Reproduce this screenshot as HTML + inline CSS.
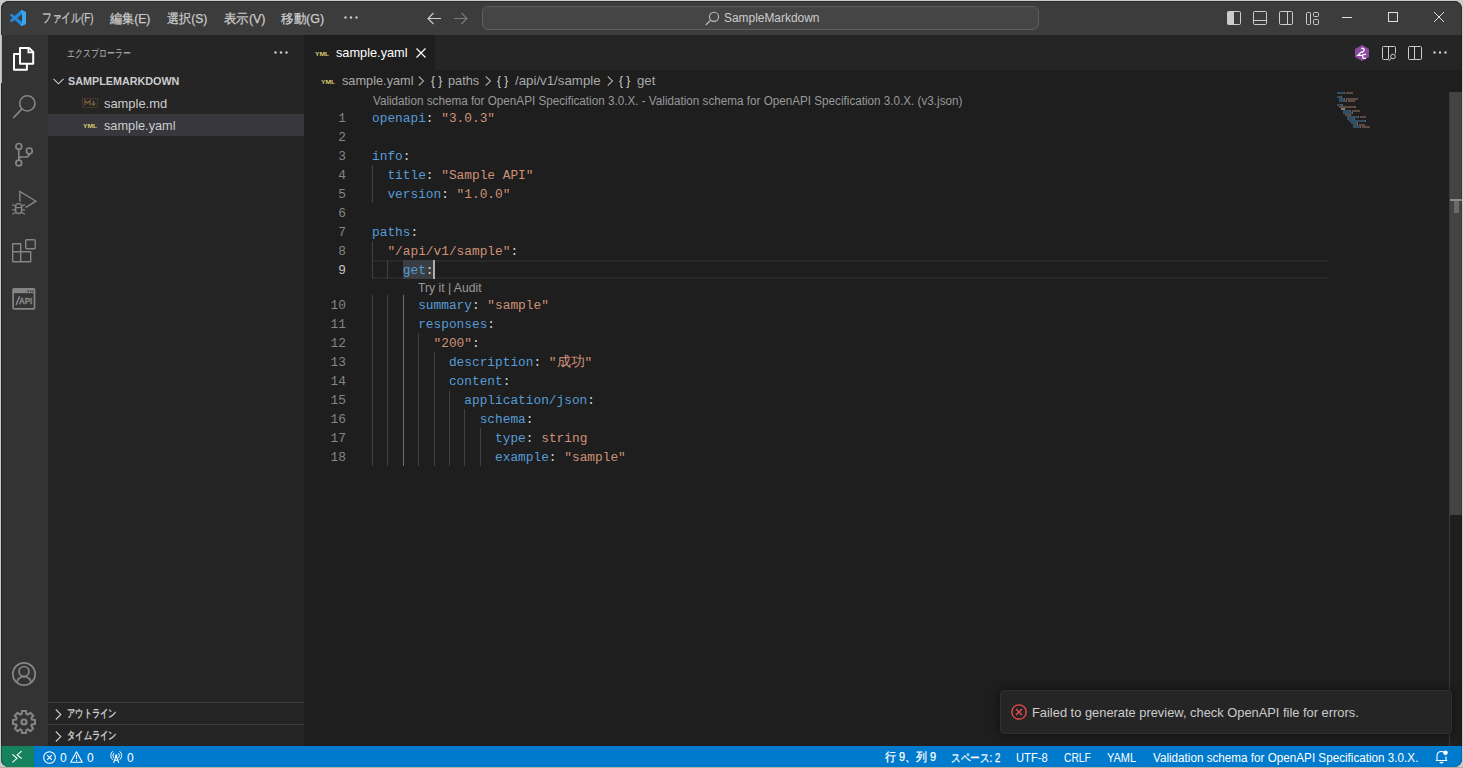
<!DOCTYPE html>
<html><head><meta charset="utf-8">
<style>
*{margin:0;padding:0;box-sizing:border-box}
html,body{width:1463px;height:768px;overflow:hidden;background:#cacaca}
body{font-family:"Liberation Sans",sans-serif;position:relative}
.a{position:absolute}
#win{position:absolute;left:0;top:0;width:1463px;height:768px;clip-path:inset(1px 1px 1px 1px round 8px);background:#1e1e1e}
#frame{position:absolute;left:1px;top:1px;width:1461px;height:766px;border-radius:8px;border:1px solid rgba(0,0,0,0.28);border-bottom-color:transparent;border-right-color:rgba(0,0,0,0.15);pointer-events:none}
.t{white-space:pre;line-height:1}
#title{left:0;top:0;width:1463px;height:35px;background:#3c3c3c}
#act{left:0;top:35px;width:48px;height:711px;background:#333333}
#side{left:48px;top:35px;width:256px;height:711px;background:#252526}
#tabs{left:304px;top:35px;width:1159px;height:35px;background:#252526}
#status{left:0;top:746px;width:1463px;height:22px;background:#007acc}
.menu{color:#cccccc;font-size:13px;top:12px}
.code{font-family:"Liberation Mono",monospace;font-size:12.82px;line-height:19px;height:19px;white-space:pre;color:#d4d4d4}
.k{color:#569cd6}.s{color:#ce9178}.p{color:#d4d4d4}
.ln{color:#858585;text-align:right;width:60px;left:286px;font-family:"Liberation Mono",monospace;font-size:12.82px;line-height:19px;height:19px}
.ln.cur{color:#c6c6c6}
.ig{position:absolute;width:1px}
.st{color:#ffffff;font-size:12px;top:752px}
svg{position:absolute;overflow:visible}
</style></head><body>
<div class="a" style="left:0;top:767px;width:1463px;height:1px;background:#b9ada2"></div>
<div id="win">
<div class="a" id="title"></div>
<div class="a" id="act"></div>
<div class="a" id="side"></div>
<div class="a" id="tabs"></div>
<div class="a" style="left:304px;top:35px;width:131px;height:35px;background:#1e1e1e"></div>
<div class="a" id="status"></div>
<div class="a" style="left:0;top:746px;width:34px;height:22px;background:#16825d"></div>

<!-- TITLE BAR -->
<svg style="left:10px;top:10px" width="16" height="16" viewBox="0 0 100 100">
 <path d="M96.46 10.8 L75.86 0.87 C73.47 -0.28 70.62 0.2 68.75 2.08 L29.3 38.06 L12.12 25.02 C10.52 23.8 8.28 23.9 6.79 25.26 L1.28 30.27 C-0.53 31.92 -0.53 34.77 1.28 36.42 L16.18 50 L1.28 63.58 C-0.53 65.23 -0.53 68.08 1.28 69.73 L6.79 74.74 C8.28 76.1 10.52 76.2 12.12 74.98 L29.3 61.94 L68.75 97.92 C70.62 99.8 73.47 100.28 75.86 99.13 L96.46 89.2 C98.62 88.16 100 85.97 100 83.57 V16.43 C100 14.03 98.62 11.84 96.46 10.8 Z M75.02 72.7 L45.08 50 L75.02 27.3 Z" fill="#2489db" fill-rule="evenodd"/>
 <path d="M75.86 0.87 L96.46 10.8 C98.62 11.84 100 14.03 100 16.43 V83.57 C100 85.97 98.62 88.16 96.46 89.2 L75.86 99.13 C73.9 100 72 100 70.5 99 L75.02 72.7 V27.3 L70.5 1 C72 0 73.9 0 75.86 0.87Z" fill="#3aa6ef"/>
</svg>
<svg style="left:344px;top:16px" width="14" height="4"><circle cx="1.5" cy="1.5" r="1.2" fill="#cccccc"/><circle cx="7" cy="1.5" r="1.2" fill="#cccccc"/><circle cx="12.5" cy="1.5" r="1.2" fill="#cccccc"/></svg>
<svg style="left:427px;top:12px" width="15" height="13" viewBox="0 0 15 13"><path d="M14 6.5 H1.5 M6.5 1 L1 6.5 L6.5 12" stroke="#cccccc" stroke-width="1.1" fill="none"/></svg>
<svg style="left:453px;top:12px" width="15" height="13" viewBox="0 0 15 13"><path d="M1 6.5 H13.5 M8.5 1 L14 6.5 L8.5 12" stroke="#7a7a7a" stroke-width="1.1" fill="none"/></svg>
<div class="a" style="left:482px;top:6px;width:557px;height:24px;border-radius:6px;background:#454545;border:1px solid #5e5e5e"></div>
<svg style="left:705px;top:11px" width="15" height="15" viewBox="0 0 15 15"><circle cx="9" cy="5.8" r="4.6" stroke="#bdbdbd" stroke-width="1.1" fill="none"/><path d="M5.7 9.1 L0.8 14" stroke="#bdbdbd" stroke-width="1.2"/></svg>
<!-- layout icons -->
<svg style="left:1227px;top:11px" width="14" height="14" viewBox="0 0 14 14"><rect x="0.5" y="0.5" width="13" height="13" rx="1.2" fill="none" stroke="#cccccc"/><rect x="0.5" y="0.5" width="6" height="13" fill="#cccccc"/><path d="M6.5 0.5V13.5" stroke="#cccccc"/></svg>
<svg style="left:1253px;top:11px" width="14" height="14" viewBox="0 0 14 14"><rect x="0.5" y="0.5" width="13" height="13" rx="1.2" fill="none" stroke="#cccccc"/><path d="M0.5 9.5H13.5" stroke="#cccccc"/></svg>
<svg style="left:1279px;top:11px" width="14" height="14" viewBox="0 0 14 14"><rect x="0.5" y="0.5" width="13" height="13" rx="1.2" fill="none" stroke="#cccccc"/><path d="M8.5 0.5V13.5" stroke="#cccccc"/></svg>
<svg style="left:1306px;top:12px" width="14" height="13" viewBox="0 0 14 13"><rect x="0.5" y="0.5" width="4" height="12" rx="1" fill="none" stroke="#cccccc"/><rect x="7.5" y="0.5" width="5" height="4" rx="1" fill="none" stroke="#cccccc"/><rect x="7.5" y="7.5" width="5" height="5" rx="1" fill="none" stroke="#cccccc"/></svg>
<!-- window controls -->
<div class="a" style="left:1342px;top:17px;width:10px;height:1px;background:#e0e0e0"></div>
<div class="a" style="left:1388px;top:12px;width:10px;height:10px;border:1px solid #e0e0e0"></div>
<svg style="left:1434px;top:12px" width="10" height="10" viewBox="0 0 10 10"><path d="M0 0L10 10M10 0L0 10" stroke="#e0e0e0" stroke-width="1"/></svg>

<!-- ACTIVITY BAR -->
<div class="a" style="left:0;top:35px;width:2px;height:48px;background:#ffffff"></div>
<svg style="left:12px;top:47px" width="24" height="24" viewBox="0 0 24 24">
 <path d="M8 1.1 H17.3 L21.2 5 V16.8 H8 Z" fill="none" stroke="#ffffff" stroke-width="2" stroke-linejoin="round"/>
 <path d="M16.4 1.1 V5.4 H21.2" fill="none" stroke="#ffffff" stroke-width="1.8"/>
 <path d="M8 7 H2 V22.8 H14.9 V16.8" fill="none" stroke="#ffffff" stroke-width="2" stroke-linejoin="round"/>
</svg>
<svg style="left:12px;top:95px" width="24" height="24" viewBox="0 0 24 24">
 <circle cx="15.3" cy="8.4" r="7.6" fill="none" stroke="#858585" stroke-width="1.6"/><path d="M9.9 13.8 L1.3 23" stroke="#858585" stroke-width="1.8"/>
</svg>
<svg style="left:12px;top:143px" width="24" height="24" viewBox="0 0 24 24">
 <circle cx="6.8" cy="3.4" r="2.9" fill="none" stroke="#858585" stroke-width="1.7"/>
 <circle cx="17.3" cy="7.9" r="2.9" fill="none" stroke="#858585" stroke-width="1.7"/>
 <circle cx="6.8" cy="20" r="2.9" fill="none" stroke="#858585" stroke-width="1.7"/>
 <path d="M6.8 6.3 V17.1 M17.3 10.8 Q17.3 14 14 14 H9.5 Q6.8 14 6.8 16.5" fill="none" stroke="#858585" stroke-width="1.6"/>
</svg>
<svg style="left:12px;top:191px" width="24" height="24" viewBox="0 0 24 24">
 <path d="M7.9 10.6 V0.4 L23.9 10.2 L13.5 16.6" fill="none" stroke="#858585" stroke-width="1.4" stroke-linejoin="miter"/>
 <rect x="3.6" y="12.6" width="6.1" height="10" rx="3" fill="none" stroke="#858585" stroke-width="1.4"/>
 <path d="M3.6 16.6 H9.7 M0.4 13.6 L3.2 15 M0.3 18.8 H3.4 M0.4 23.2 L3.3 21.6 M12.9 13.6 L10.1 15 M13 18.8 H9.9 M12.9 23.2 L10 21.6" stroke="#858585" stroke-width="1.3" fill="none"/>
</svg>
<svg style="left:12px;top:239px" width="24" height="24" viewBox="0 0 24 24">
 <path d="M0.7 4.7 H8.7 V12.7 H18.7 V22.7 H0.7 Z M0.7 12.7 H8.7 V22.7" fill="none" stroke="#858585" stroke-width="1.4" stroke-linejoin="round"/>
 <rect x="13.7" y="0.7" width="9.5" height="9" rx="1" fill="none" stroke="#858585" stroke-width="1.4"/>
</svg>
<svg style="left:12px;top:287px" width="24" height="24" viewBox="0 0 24 24">
 <rect x="1.1" y="1.8" width="21.4" height="20" rx="1" fill="none" stroke="#858585" stroke-width="1.7"/>
 <rect x="1.1" y="1.8" width="21.4" height="4.4" fill="#858585"/>
 <rect x="15.6" y="3.3" width="1.2" height="1.8" fill="#333333"/><rect x="18.1" y="3.3" width="1.2" height="1.8" fill="#333333"/><rect x="20.4" y="3.3" width="1.2" height="1.8" fill="#333333"/>
 <path d="M7.6 9.2 L4.1 17.9" stroke="#858585" stroke-width="1.5"/>
 <text x="7" y="17.3" font-family="Liberation Sans" font-weight="bold" font-size="9.8" fill="#858585" stroke="#858585" stroke-width="0.35" textLength="13.2" lengthAdjust="spacingAndGlyphs">API</text>
</svg>
<svg style="left:12px;top:662px" width="24" height="24" viewBox="0 0 24 24">
 <circle cx="12" cy="12" r="11.2" fill="none" stroke="#858585" stroke-width="1.7"/>
 <circle cx="12" cy="9.4" r="4.9" fill="none" stroke="#858585" stroke-width="1.7"/>
 <path d="M4.6 20.5 C5.8 16.8 8.5 14.7 12 14.7 C15.5 14.7 18.2 16.8 19.4 20.5" fill="none" stroke="#858585" stroke-width="1.7"/>
</svg>
<svg style="left:11px;top:709px" width="26" height="26" viewBox="0 0 26 26">
 <path d="M10.50 5.10 L11.10 2.00 L14.90 2.00 L15.50 5.10 L16.82 5.65 L19.43 3.88 L22.12 6.57 L20.35 9.18 L20.90 10.50 L24.00 11.10 L24.00 14.90 L20.90 15.50 L20.35 16.82 L22.12 19.43 L19.43 22.12 L16.82 20.35 L15.50 20.90 L14.90 24.00 L11.10 24.00 L10.50 20.90 L9.18 20.35 L6.57 22.12 L3.88 19.43 L5.65 16.82 L5.10 15.50 L2.00 14.90 L2.00 11.10 L5.10 10.50 L5.65 9.18 L3.88 6.57 L6.57 3.88 L9.18 5.65 Z" fill="none" stroke="#858585" stroke-width="2" stroke-linejoin="miter"/>
 <circle cx="13" cy="13" r="2.5" fill="none" stroke="#858585" stroke-width="2.2"/>
</svg>

<!-- SIDEBAR -->
<svg style="left:274px;top:51px" width="14" height="4"><circle cx="1.5" cy="1.5" r="1.2" fill="#cccccc"/><circle cx="7" cy="1.5" r="1.2" fill="#cccccc"/><circle cx="12.5" cy="1.5" r="1.2" fill="#cccccc"/></svg>
<svg style="left:53px;top:78px" width="11" height="7" viewBox="0 0 11 7"><path d="M0.5 0.8 L5.5 5.8 L10.5 0.8" fill="none" stroke="#cccccc" stroke-width="1.1"/></svg>
<div class="a" style="left:48px;top:114px;width:256px;height:22px;background:#37373d"></div>
<svg style="left:82px;top:98px" width="16" height="10" viewBox="0 0 16 10"><rect x="0.5" y="0.5" width="15" height="9" fill="none" stroke="#45372a" stroke-width="1"/><path d="M3 7.5 V2.5 L5.5 5.2 L8 2.5 V7.5 M11.5 2.5 V7.3 M9.6 5.4 L11.5 7.4 L13.4 5.4" fill="none" stroke="#7a5f3c" stroke-width="1.2"/></svg>
<svg style="left:82.8px;top:122.8px" width="15" height="5" viewBox="0 0 15 5"><text x="0" y="4.6" font-family="Liberation Sans" font-weight="bold" font-size="6.2" fill="#dccb6e" textLength="14.2" lengthAdjust="spacingAndGlyphs">YML</text></svg>
<div class="a" style="left:48px;top:702px;width:256px;height:1px;background:#3c3c3c"></div>
<div class="a" style="left:48px;top:724px;width:256px;height:1px;background:#3c3c3c"></div>
<svg style="left:55px;top:709px" width="7" height="11" viewBox="0 0 7 11"><path d="M0.8 0.5 L5.8 5.5 L0.8 10.5" fill="none" stroke="#cccccc" stroke-width="1.1"/></svg>
<svg style="left:55px;top:731px" width="7" height="11" viewBox="0 0 7 11"><path d="M0.8 0.5 L5.8 5.5 L0.8 10.5" fill="none" stroke="#cccccc" stroke-width="1.1"/></svg>

<!-- TABS -->
<svg style="left:314.7px;top:50.6px" width="15" height="5" viewBox="0 0 15 5"><text x="0" y="4.6" font-family="Liberation Sans" font-weight="bold" font-size="6.2" fill="#dccb6e" textLength="14.2" lengthAdjust="spacingAndGlyphs">YML</text></svg>
<svg style="left:416px;top:48px" width="10" height="10" viewBox="0 0 10 10"><path d="M0.5 0.5L9.5 9.5M9.5 0.5L0.5 9.5" stroke="#ffffff" stroke-width="1.2"/></svg>
<!-- editor actions -->
<svg style="left:1355px;top:45px" width="14" height="16" viewBox="0 0 14 16"><path d="M7 0 L14 4 V12 L7 16 L0 12 V4 Z" fill="#8a4a9e"/><path d="M6.3 3.6 Q8.6 2.6 9.2 4.3 Q9.4 5.8 6.8 7.6 M6.6 6.6 L2.9 10.4 H7.4 M11 9.4 H8.9 Q7.7 9.4 7.7 10.8 V12 Q7.7 13.3 9 13.3 H11" fill="none" stroke="#ffffff" stroke-width="1.3"/></svg>
<svg style="left:1382px;top:46px" width="15" height="15" viewBox="0 0 15 15"><path d="M6 13.5 H1.5 Q0.5 13.5 0.5 12.5 V1.5 Q0.5 0.5 1.5 0.5 H12.5 Q13.5 0.5 13.5 1.5 V7.5 M6.5 0.5 V13.5" fill="none" stroke="#cccccc"/><circle cx="11" cy="10.5" r="2.3" fill="none" stroke="#cccccc"/><path d="M9.3 12.2 L7 14.8" stroke="#cccccc"/></svg>
<svg style="left:1408px;top:46px" width="14" height="14" viewBox="0 0 14 14"><rect x="0.5" y="0.5" width="13" height="13" rx="1" fill="none" stroke="#cccccc"/><path d="M6.5 0.5 V13.5" stroke="#cccccc"/></svg>
<svg style="left:1433px;top:51px" width="14" height="4"><circle cx="1.5" cy="1.5" r="1.2" fill="#cccccc"/><circle cx="7" cy="1.5" r="1.2" fill="#cccccc"/><circle cx="12.5" cy="1.5" r="1.2" fill="#cccccc"/></svg>

<!-- BREADCRUMBS -->
<svg style="left:320.8px;top:78.6px" width="15" height="5" viewBox="0 0 15 5"><text x="0" y="4.6" font-family="Liberation Sans" font-weight="bold" font-size="6.2" fill="#dccb6e" textLength="14.2" lengthAdjust="spacingAndGlyphs">YML</text></svg>
<svg style="left:418px;top:76px" width="7" height="10" viewBox="0 0 7 10"><path d="M0.8 0.5 L5.5 5 L0.8 9.5" fill="none" stroke="#a9a9a9" stroke-width="1.1"/></svg>
<svg style="left:485px;top:76px" width="7" height="10" viewBox="0 0 7 10"><path d="M0.8 0.5 L5.5 5 L0.8 9.5" fill="none" stroke="#a9a9a9" stroke-width="1.1"/></svg>
<svg style="left:607px;top:76px" width="7" height="10" viewBox="0 0 7 10"><path d="M0.8 0.5 L5.5 5 L0.8 9.5" fill="none" stroke="#a9a9a9" stroke-width="1.1"/></svg>
<div class="a t" style="left:42.05px;top:11px;font-size:13px;color:#cccccc;-webkit-text-stroke:0.25px currentColor;transform:scaleX(0.7493);transform-origin:0 0">ファイル(F)</div>
<div class="a t" style="left:109.80px;top:12px;font-size:13px;color:#cccccc;-webkit-text-stroke:0.25px currentColor;transform:scaleX(0.9302);transform-origin:0 0">編集(E)</div>
<div class="a t" style="left:166.70px;top:12px;font-size:13px;color:#cccccc;-webkit-text-stroke:0.25px currentColor;transform:scaleX(0.9302);transform-origin:0 0">選択(S)</div>
<div class="a t" style="left:223.70px;top:12px;font-size:13px;color:#cccccc;-webkit-text-stroke:0.25px currentColor;transform:scaleX(0.9581);transform-origin:0 0">表示(V)</div>
<div class="a t" style="left:281.00px;top:12px;font-size:13px;color:#cccccc;-webkit-text-stroke:0.25px currentColor;transform:scaleX(0.9659);transform-origin:0 0">移動(G)</div>
<div class="a t" style="left:723.80px;top:12px;font-size:12px;color:#cccccc;transform:scaleX(0.9938);transform-origin:0 0">SampleMarkdown</div>
<div class="a t" style="left:67.48px;top:48px;font-size:11px;color:#bbbbbb;transform:scaleX(0.7221);transform-origin:0 0">エクスプローラー</div>
<div class="a t" style="left:68.20px;top:76px;font-size:11px;font-weight:bold;color:#cccccc;transform:scaleX(0.9796);transform-origin:0 0">SAMPLEMARKDOWN</div>
<div class="a t" style="left:104.00px;top:97px;font-size:13px;color:#cccccc;transform:scaleX(0.9921);transform-origin:0 0">sample.md</div>
<div class="a t" style="left:104.00px;top:119px;font-size:13px;color:#cccccc;transform:scaleX(0.9806);transform-origin:0 0">sample.yaml</div>
<div class="a t" style="left:67.35px;top:708px;font-size:11px;font-weight:bold;color:#cccccc;transform:scaleX(0.7523);transform-origin:0 0">アウトライン</div>
<div class="a t" style="left:67.35px;top:730px;font-size:11px;font-weight:bold;color:#cccccc;transform:scaleX(0.7523);transform-origin:0 0">タイムライン</div>
<div class="a t" style="left:336.00px;top:46px;font-size:13px;color:#ffffff;transform:scaleX(0.9806);transform-origin:0 0">sample.yaml</div>
<div class="a t" style="left:342.00px;top:74px;font-size:13px;color:#a9a9a9;transform:scaleX(0.9806);transform-origin:0 0">sample.yaml</div>
<div class="a t" style="left:431.00px;top:74px;font-size:13px;color:#cccccc;transform:scaleX(0.9154);transform-origin:0 0">{ }</div>
<div class="a t" style="left:447.72px;top:74px;font-size:13px;color:#a9a9a9;transform:scaleX(0.9774);transform-origin:0 0">paths</div>
<div class="a t" style="left:497.00px;top:74px;font-size:13px;color:#cccccc;transform:scaleX(0.9154);transform-origin:0 0">{ }</div>
<div class="a t" style="left:515.20px;top:74px;font-size:13px;color:#a9a9a9;transform:scaleX(1.0214);transform-origin:0 0">/api/v1/sample</div>
<div class="a t" style="left:618.80px;top:74px;font-size:13px;color:#cccccc;transform:scaleX(0.9154);transform-origin:0 0">{ }</div>
<div class="a t" style="left:636.60px;top:74px;font-size:13px;color:#a9a9a9;transform:scaleX(1.0167);transform-origin:0 0">get</div>
<div class="a t" style="left:372.60px;top:95px;font-size:12px;color:#999999;transform:scaleX(0.9739);transform-origin:0 0">Validation schema for OpenAPI Specification 3.0.X. - Validation schema for OpenAPI Specification 3.0.X. (v3.json)</div>
<div class="a t" style="left:418.10px;top:282px;font-size:12px;color:#999999;transform:scaleX(1.0143);transform-origin:0 0">Try it | Audit</div>
<div class="a t" style="left:885.40px;top:751px;font-size:12px;color:#ffffff;-webkit-text-stroke:0.25px currentColor;transform:scaleX(0.9143);transform-origin:0 0">行 9、列 9</div>
<div class="a t" style="left:951.20px;top:752px;font-size:12px;color:#ffffff;-webkit-text-stroke:0.25px currentColor;transform:scaleX(0.8033);transform-origin:0 0">スペース: 2</div>
<div class="a t" style="left:1016.27px;top:752px;font-size:12px;color:#ffffff;transform:scaleX(0.9333);transform-origin:0 0">UTF-8</div>
<div class="a t" style="left:1063.80px;top:752px;font-size:12px;color:#ffffff;transform:scaleX(0.8581);transform-origin:0 0">CRLF</div>
<div class="a t" style="left:1106.80px;top:752px;font-size:12px;color:#ffffff;transform:scaleX(0.9156);transform-origin:0 0">YAML</div>
<div class="a t" style="left:1152.60px;top:752px;font-size:12px;color:#ffffff;transform:scaleX(0.9735);transform-origin:0 0">Validation schema for OpenAPI Specification 3.0.X.</div>

<!-- EDITOR -->
<div class="a" style="left:372px;top:260px;width:957px;height:19px;border-top:2px solid #282828;border-bottom:2px solid #282828"></div>
<div class="a" style="left:403px;top:260px;width:31px;height:19px;background:#3a3d41"></div>
<div class="ig" style="left:372px;top:165px;height:19px;background:#404040"></div>
<div class="ig" style="left:372px;top:184px;height:19px;background:#404040"></div>
<div class="ig" style="left:372px;top:241px;height:19px;background:#404040"></div>
<div class="ig" style="left:372px;top:260px;height:19px;background:#404040"></div>
<div class="ig" style="left:387px;top:260px;height:19px;background:#404040"></div>
<div class="ig" style="left:372px;top:295px;height:19px;background:#404040"></div>
<div class="ig" style="left:387px;top:295px;height:19px;background:#404040"></div>
<div class="ig" style="left:403px;top:295px;height:19px;background:#707070"></div>
<div class="ig" style="left:372px;top:314px;height:19px;background:#404040"></div>
<div class="ig" style="left:387px;top:314px;height:19px;background:#404040"></div>
<div class="ig" style="left:403px;top:314px;height:19px;background:#707070"></div>
<div class="ig" style="left:372px;top:333px;height:19px;background:#404040"></div>
<div class="ig" style="left:387px;top:333px;height:19px;background:#404040"></div>
<div class="ig" style="left:403px;top:333px;height:19px;background:#707070"></div>
<div class="ig" style="left:418px;top:333px;height:19px;background:#404040"></div>
<div class="ig" style="left:372px;top:352px;height:19px;background:#404040"></div>
<div class="ig" style="left:387px;top:352px;height:19px;background:#404040"></div>
<div class="ig" style="left:403px;top:352px;height:19px;background:#707070"></div>
<div class="ig" style="left:418px;top:352px;height:19px;background:#404040"></div>
<div class="ig" style="left:434px;top:352px;height:19px;background:#404040"></div>
<div class="ig" style="left:372px;top:371px;height:19px;background:#404040"></div>
<div class="ig" style="left:387px;top:371px;height:19px;background:#404040"></div>
<div class="ig" style="left:403px;top:371px;height:19px;background:#707070"></div>
<div class="ig" style="left:418px;top:371px;height:19px;background:#404040"></div>
<div class="ig" style="left:434px;top:371px;height:19px;background:#404040"></div>
<div class="ig" style="left:372px;top:390px;height:19px;background:#404040"></div>
<div class="ig" style="left:387px;top:390px;height:19px;background:#404040"></div>
<div class="ig" style="left:403px;top:390px;height:19px;background:#707070"></div>
<div class="ig" style="left:418px;top:390px;height:19px;background:#404040"></div>
<div class="ig" style="left:434px;top:390px;height:19px;background:#404040"></div>
<div class="ig" style="left:449px;top:390px;height:19px;background:#404040"></div>
<div class="ig" style="left:372px;top:409px;height:19px;background:#404040"></div>
<div class="ig" style="left:387px;top:409px;height:19px;background:#404040"></div>
<div class="ig" style="left:403px;top:409px;height:19px;background:#707070"></div>
<div class="ig" style="left:418px;top:409px;height:19px;background:#404040"></div>
<div class="ig" style="left:434px;top:409px;height:19px;background:#404040"></div>
<div class="ig" style="left:449px;top:409px;height:19px;background:#404040"></div>
<div class="ig" style="left:464px;top:409px;height:19px;background:#404040"></div>
<div class="ig" style="left:372px;top:428px;height:19px;background:#404040"></div>
<div class="ig" style="left:387px;top:428px;height:19px;background:#404040"></div>
<div class="ig" style="left:403px;top:428px;height:19px;background:#707070"></div>
<div class="ig" style="left:418px;top:428px;height:19px;background:#404040"></div>
<div class="ig" style="left:434px;top:428px;height:19px;background:#404040"></div>
<div class="ig" style="left:449px;top:428px;height:19px;background:#404040"></div>
<div class="ig" style="left:464px;top:428px;height:19px;background:#404040"></div>
<div class="ig" style="left:480px;top:428px;height:19px;background:#404040"></div>
<div class="ig" style="left:372px;top:447px;height:19px;background:#404040"></div>
<div class="ig" style="left:387px;top:447px;height:19px;background:#404040"></div>
<div class="ig" style="left:403px;top:447px;height:19px;background:#707070"></div>
<div class="ig" style="left:418px;top:447px;height:19px;background:#404040"></div>
<div class="ig" style="left:434px;top:447px;height:19px;background:#404040"></div>
<div class="ig" style="left:449px;top:447px;height:19px;background:#404040"></div>
<div class="ig" style="left:464px;top:447px;height:19px;background:#404040"></div>
<div class="ig" style="left:480px;top:447px;height:19px;background:#404040"></div>
<div class="a ln" style="top:109px">1</div>
<div class="a code" style="left:372px;top:109px"><span class="k">openapi</span><span class="p">: </span><span class="s">"3.0.3"</span></div>
<div class="a ln" style="top:128px">2</div>
<div class="a code" style="left:372px;top:128px"></div>
<div class="a ln" style="top:147px">3</div>
<div class="a code" style="left:372px;top:147px"><span class="k">info</span><span class="p">:</span></div>
<div class="a ln" style="top:166px">4</div>
<div class="a code" style="left:372px;top:166px">  <span class="k">title</span><span class="p">: </span><span class="s">"Sample API"</span></div>
<div class="a ln" style="top:185px">5</div>
<div class="a code" style="left:372px;top:185px">  <span class="k">version</span><span class="p">: </span><span class="s">"1.0.0"</span></div>
<div class="a ln" style="top:204px">6</div>
<div class="a code" style="left:372px;top:204px"></div>
<div class="a ln" style="top:223px">7</div>
<div class="a code" style="left:372px;top:223px"><span class="k">paths</span><span class="p">:</span></div>
<div class="a ln" style="top:242px">8</div>
<div class="a code" style="left:372px;top:242px">  <span class="s">"/api/v1/sample"</span><span class="p">:</span></div>
<div class="a ln cur" style="top:261px">9</div>
<div class="a code" style="left:372px;top:261px">    <span class="k">get</span><span class="p">:</span></div>
<div class="a ln" style="top:296px">10</div>
<div class="a code" style="left:372px;top:296px">      <span class="k">summary</span><span class="p">: </span><span class="s">"sample"</span></div>
<div class="a ln" style="top:315px">11</div>
<div class="a code" style="left:372px;top:315px">      <span class="k">responses</span><span class="p">:</span></div>
<div class="a ln" style="top:334px">12</div>
<div class="a code" style="left:372px;top:334px">        <span class="s">"200"</span><span class="p">:</span></div>
<div class="a ln" style="top:353px">13</div>
<div class="a code" style="left:372px;top:353px">          <span class="k">description</span><span class="p">: </span><span class="s">"<span style='font-size:14px'>成功</span>"</span></div>
<div class="a ln" style="top:372px">14</div>
<div class="a code" style="left:372px;top:372px">          <span class="k">content</span><span class="p">:</span></div>
<div class="a ln" style="top:391px">15</div>
<div class="a code" style="left:372px;top:391px">            <span class="k">application/json</span><span class="p">:</span></div>
<div class="a ln" style="top:410px">16</div>
<div class="a code" style="left:372px;top:410px">              <span class="k">schema</span><span class="p">:</span></div>
<div class="a ln" style="top:429px">17</div>
<div class="a code" style="left:372px;top:429px">                <span class="k">type</span><span class="p">: </span><span class="s">string</span></div>
<div class="a ln" style="top:448px">18</div>
<div class="a code" style="left:372px;top:448px">                <span class="k">example</span><span class="p">: </span><span class="s">"sample"</span></div>
<div class="a" style="left:433px;top:260px;width:2px;height:19px;background:#aeafad"></div>

<!-- minimap -->
<div class="a" style="left:1337px;top:92px;width:7px;height:2px;background:#569cd6;opacity:0.38"></div>
<div class="a" style="left:1344px;top:92px;width:1px;height:2px;background:#d4d4d4;opacity:0.38"></div>
<div class="a" style="left:1346px;top:92px;width:7px;height:2px;background:#ce9178;opacity:0.38"></div>
<div class="a" style="left:1337px;top:96px;width:4px;height:2px;background:#569cd6;opacity:0.38"></div>
<div class="a" style="left:1341px;top:96px;width:1px;height:2px;background:#d4d4d4;opacity:0.38"></div>
<div class="a" style="left:1339px;top:98px;width:5px;height:2px;background:#569cd6;opacity:0.38"></div>
<div class="a" style="left:1344px;top:98px;width:1px;height:2px;background:#d4d4d4;opacity:0.38"></div>
<div class="a" style="left:1346px;top:98px;width:12px;height:2px;background:#ce9178;opacity:0.38"></div>
<div class="a" style="left:1339px;top:100px;width:7px;height:2px;background:#569cd6;opacity:0.38"></div>
<div class="a" style="left:1346px;top:100px;width:1px;height:2px;background:#d4d4d4;opacity:0.38"></div>
<div class="a" style="left:1348px;top:100px;width:7px;height:2px;background:#ce9178;opacity:0.38"></div>
<div class="a" style="left:1337px;top:104px;width:5px;height:2px;background:#569cd6;opacity:0.38"></div>
<div class="a" style="left:1342px;top:104px;width:1px;height:2px;background:#d4d4d4;opacity:0.38"></div>
<div class="a" style="left:1339px;top:106px;width:16px;height:2px;background:#ce9178;opacity:0.38"></div>
<div class="a" style="left:1355px;top:106px;width:1px;height:2px;background:#d4d4d4;opacity:0.38"></div>
<div class="a" style="left:1341px;top:108px;width:3px;height:2px;background:#569cd6;opacity:0.38"></div>
<div class="a" style="left:1344px;top:108px;width:1px;height:2px;background:#d4d4d4;opacity:0.38"></div>
<div class="a" style="left:1343px;top:110px;width:7px;height:2px;background:#569cd6;opacity:0.38"></div>
<div class="a" style="left:1350px;top:110px;width:1px;height:2px;background:#d4d4d4;opacity:0.38"></div>
<div class="a" style="left:1352px;top:110px;width:8px;height:2px;background:#ce9178;opacity:0.38"></div>
<div class="a" style="left:1343px;top:112px;width:9px;height:2px;background:#569cd6;opacity:0.38"></div>
<div class="a" style="left:1352px;top:112px;width:1px;height:2px;background:#d4d4d4;opacity:0.38"></div>
<div class="a" style="left:1345px;top:114px;width:5px;height:2px;background:#ce9178;opacity:0.38"></div>
<div class="a" style="left:1350px;top:114px;width:1px;height:2px;background:#d4d4d4;opacity:0.38"></div>
<div class="a" style="left:1347px;top:116px;width:11px;height:2px;background:#569cd6;opacity:0.38"></div>
<div class="a" style="left:1358px;top:116px;width:1px;height:2px;background:#d4d4d4;opacity:0.38"></div>
<div class="a" style="left:1360px;top:116px;width:6px;height:2px;background:#ce9178;opacity:0.38"></div>
<div class="a" style="left:1347px;top:118px;width:7px;height:2px;background:#569cd6;opacity:0.38"></div>
<div class="a" style="left:1354px;top:118px;width:1px;height:2px;background:#d4d4d4;opacity:0.38"></div>
<div class="a" style="left:1349px;top:120px;width:16px;height:2px;background:#569cd6;opacity:0.38"></div>
<div class="a" style="left:1365px;top:120px;width:1px;height:2px;background:#d4d4d4;opacity:0.38"></div>
<div class="a" style="left:1351px;top:122px;width:6px;height:2px;background:#569cd6;opacity:0.38"></div>
<div class="a" style="left:1357px;top:122px;width:1px;height:2px;background:#d4d4d4;opacity:0.38"></div>
<div class="a" style="left:1353px;top:124px;width:4px;height:2px;background:#569cd6;opacity:0.38"></div>
<div class="a" style="left:1357px;top:124px;width:1px;height:2px;background:#d4d4d4;opacity:0.38"></div>
<div class="a" style="left:1359px;top:124px;width:6px;height:2px;background:#ce9178;opacity:0.38"></div>
<div class="a" style="left:1353px;top:126px;width:7px;height:2px;background:#569cd6;opacity:0.38"></div>
<div class="a" style="left:1360px;top:126px;width:1px;height:2px;background:#d4d4d4;opacity:0.38"></div>
<div class="a" style="left:1362px;top:126px;width:8px;height:2px;background:#ce9178;opacity:0.38"></div>
<div class="a" style="left:1341px;top:108px;width:4px;height:2px;background:#8a8a8a;opacity:0.8"></div>
<!-- scrollbar -->
<div class="a" style="left:1449px;top:92px;width:1px;height:654px;background:#3a3a3a"></div>
<div class="a" style="left:1450px;top:92px;width:12px;height:423px;background:#434343"></div>
<div class="a" style="left:1450px;top:199px;width:12px;height:2px;background:#8a8a8a"></div>
<div class="a" style="left:1454px;top:201px;width:5px;height:12px;background:#6a6a6a"></div>

<!-- NOTIFICATION -->
<div class="a" style="left:1000px;top:690px;width:452px;height:44px;background:#252526;border:1px solid #303031;border-radius:4px;box-shadow:0 0 8px 2px rgba(0,0,0,0.36)"></div>
<div class="a t" style="left:1031.51px;top:706px;font-size:13px;color:#cccccc;transform:scaleX(0.9896);transform-origin:0 0">Failed to generate preview, check OpenAPI file for errors.</div>
<svg style="left:1011px;top:704px" width="16" height="16" viewBox="0 0 16 16"><circle cx="8" cy="8" r="7.2" fill="none" stroke="#f14c4c" stroke-width="1.3"/><path d="M5 5 L11 11 M11 5 L5 11" stroke="#f14c4c" stroke-width="1.3"/></svg>

<!-- STATUS BAR -->
<svg style="left:12px;top:751px" width="11" height="12" viewBox="0 0 11 12"><path d="M0.4 3.4 L5 7.3 L0.4 11.4 M9.7 0.2 L5.2 3.9 L9.7 7.6" fill="none" stroke="#ffffff" stroke-width="1.1"/></svg>
<svg style="left:43px;top:751px" width="13" height="13" viewBox="0 0 13 13"><circle cx="6.5" cy="6.5" r="5.8" fill="none" stroke="#fff" stroke-width="1.1"/><path d="M4.2 4.2 L8.8 8.8 M8.8 4.2 L4.2 8.8" stroke="#fff" stroke-width="1.1"/></svg>
<div class="a t st" style="left:60px">0</div>
<svg style="left:70px;top:750.5px" width="13" height="12" viewBox="0 0 13 12"><path d="M6.5 0.8 L12.3 11.3 H0.7 Z" fill="none" stroke="#fff" stroke-width="1.1" stroke-linejoin="round"/><path d="M6.5 4 V8 M6.5 9 V10" stroke="#fff" stroke-width="1.1"/></svg>
<div class="a t st" style="left:87px">0</div>
<svg style="left:110px;top:751px" width="13" height="12" viewBox="0 0 13 12"><path d="M2.7 0.3 A5.5 5.5 0 0 0 2.7 8.7 M9.7 0.3 A5.5 5.5 0 0 1 9.7 8.7 M4.1 2.1 A3.2 3.2 0 0 0 4.1 6.9 M8.3 2.1 A3.2 3.2 0 0 1 8.3 6.9" fill="none" stroke="#fff" stroke-width="1"/><path d="M3.6 11.7 L6.2 4.8 L8.8 11.7 M4.6 9.3 H7.8" fill="none" stroke="#fff" stroke-width="1.1"/><circle cx="6.2" cy="4.6" r="1.1" fill="#fff"/></svg>
<div class="a t st" style="left:127px">0</div>
<svg style="left:1435px;top:750px" width="13" height="14" viewBox="0 0 13 14"><path d="M2 10.5 V6 Q2 1.5 6.5 1.5 Q8 1.5 9 2.2 M11 6.5 V10.5 H0.8 H12.2 M4.8 12 Q6.5 13.8 8.2 12" fill="none" stroke="#fff" stroke-width="1.1"/><circle cx="10.5" cy="2.8" r="2.3" fill="#fff"/></svg>
</div>
<div id="frame"></div>
</body></html>
